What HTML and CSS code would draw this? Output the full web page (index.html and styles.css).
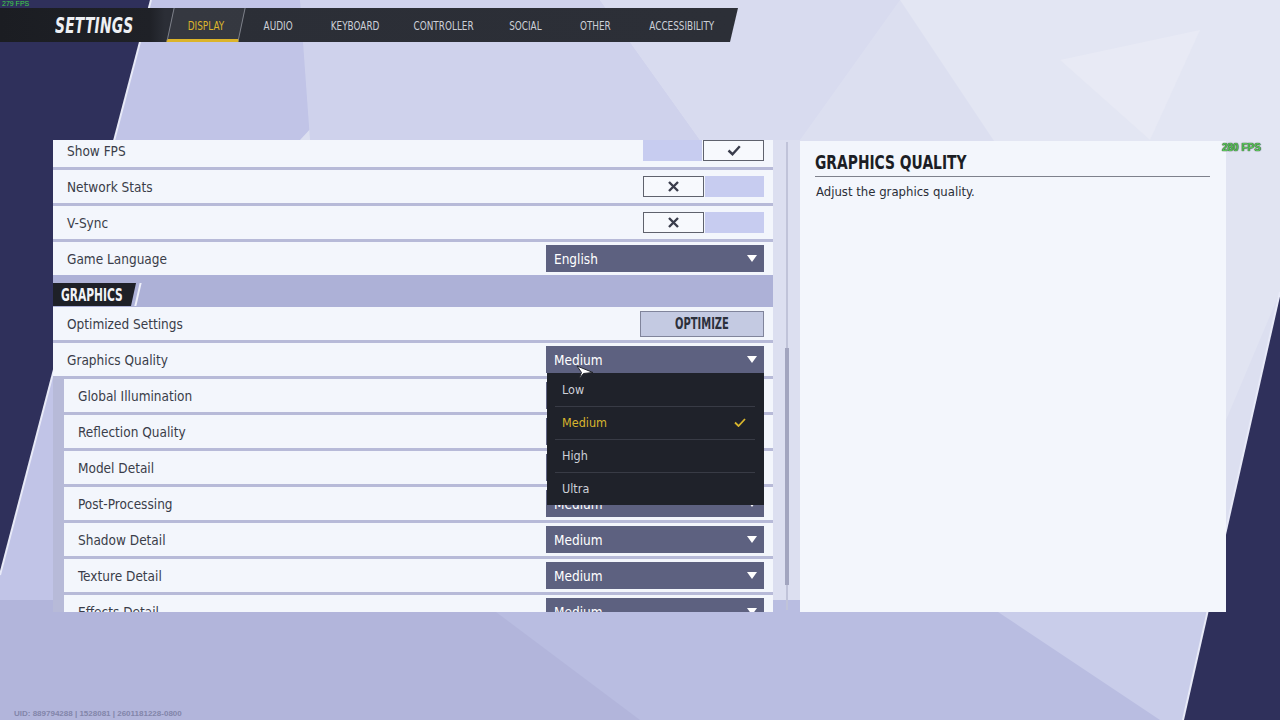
FILE: index.html
```html
<!DOCTYPE html>
<html lang="en">
<head>
    <meta charset="UTF-8">
    <meta name="viewport" content="width=device-width, initial-scale=1.0">
    <title>Settings - Display</title>
    <link rel="stylesheet" href="styles.css">
</head>
<body>

    <svg class="backdrop" viewBox="0 0 1280 720" preserveAspectRatio="none">
        <rect width="1280" height="720" fill="#dcdff0"/>
        <polygon points="150,0 430,0 300,140 0,720 0,575" fill="#c1c4e7"/>
        <polygon points="300,0 600,0 700,140 310,140" fill="#cfd2ec"/>
        <polygon points="600,0 900,0 800,140 700,140" fill="#d8dbef"/>
        <polygon points="900,0 1280,0 1280,160 1000,150" fill="#e3e6f3"/>
        <polygon points="1060,60 1200,30 1150,140" fill="#e8eaf5"/>
        <polygon points="1226,150 1280,150 1280,292 1226,420" fill="#e1e4f2"/>
        <polygon points="0,600 1280,600 1280,720 0,720" fill="#b2b5db"/>
        <polygon points="480,600 980,600 1180,720 640,720" fill="#b9bde1"/>
        <polygon points="980,600 1280,600 1280,720 1160,720" fill="#c9cdea"/>
        <polygon points="0,0 151,0 0,575" fill="#2f305b"/>
        <line x1="151" y1="0" x2="0" y2="575" stroke="#e8eaf8" stroke-width="2"/>
        <polygon points="1280,292 1280,720 1183,720" fill="#2f305b"/>
        <line x1="1280" y1="292" x2="1183" y2="720" stroke="#e8eaf8" stroke-width="2"/>
    </svg>

    <div class="fps-top">279 FPS</div>

    <header class="topbar">
        <div class="brand"><span>SETTINGS</span></div>
        <nav class="tabs">
            <a class="tab active"><span>DISPLAY</span></a>
            <a class="tab"><span>AUDIO</span></a>
            <a class="tab"><span>KEYBOARD</span></a>
            <a class="tab"><span>CONTROLLER</span></a>
            <a class="tab"><span>SOCIAL</span></a>
            <a class="tab"><span>OTHER</span></a>
            <a class="tab"><span>ACCESSIBILITY</span></a>
        </nav>
    </header>

    <main class="content">
        <section class="list-panel">
            <div class="list">
                <div class="row">
                    <span class="label">Show FPS</span>
                    <div class="toggle">
                        <span class="half fill"></span>
                        <span class="half box">
                            <svg width="14" height="11" viewBox="0 0 14 11"><path d="M1.5 5.5 L5.5 9.2 L12.8 1.2" fill="none" stroke="#3a3d4c" stroke-width="2.4"/></svg>
                        </span>
                    </div>
                </div>
                <div class="row">
                    <span class="label">Network Stats</span>
                    <div class="toggle">
                        <span class="half box">
                            <svg width="11" height="11" viewBox="0 0 11 11"><path d="M1 1 L10 10 M10 1 L1 10" stroke="#3a3d4c" stroke-width="2.4"/></svg>
                        </span>
                        <span class="half fill"></span>
                    </div>
                </div>
                <div class="row">
                    <span class="label">V-Sync</span>
                    <div class="toggle">
                        <span class="half box">
                            <svg width="11" height="11" viewBox="0 0 11 11"><path d="M1 1 L10 10 M10 1 L1 10" stroke="#3a3d4c" stroke-width="2.4"/></svg>
                        </span>
                        <span class="half fill"></span>
                    </div>
                </div>
                <div class="row">
                    <span class="label">Game Language</span>
                    <div class="select">English <svg class="caret" width="10" height="7" viewBox="0 0 10 7"><polygon points="0,0 10,0 5,7" fill="#fff"/></svg></div>
                </div>

                <div class="section">
                    <span class="section-tag"><span>GRAPHICS</span></span>
                    <span class="slash"></span>
                </div>

                <div class="row">
                    <span class="label">Optimized Settings</span>
                    <button class="btn"><span>OPTIMIZE</span></button>
                </div>
                <div class="row">
                    <span class="label">Graphics Quality</span>
                    <div class="select open">Medium <svg class="caret" width="10" height="7" viewBox="0 0 10 7"><polygon points="0,0 10,0 5,7" fill="#fff"/></svg>
                        <ul class="menu">
                            <li>Low</li>
                            <li class="picked">Medium
                                <svg width="12" height="9" viewBox="0 0 12 9"><path d="M1 4.5 L4.5 8 L11 1" fill="none" stroke="#d8b52d" stroke-width="1.8"/></svg>
                            </li>
                            <li>High</li>
                            <li>Ultra</li>
                        </ul>
                    </div>
                </div>
                <!-- these three selects sit under the open menu -->
                <div class="row sub">
                    <span class="label">Global Illumination</span>
                    <div class="select"></div>
                </div>
                <div class="row sub">
                    <span class="label">Reflection Quality</span>
                    <div class="select"></div>
                </div>
                <div class="row sub">
                    <span class="label">Model Detail</span>
                    <div class="select"></div>
                </div>
                <div class="row sub">
                    <span class="label">Post-Processing</span>
                    <div class="select">Medium <svg class="caret" width="10" height="7" viewBox="0 0 10 7"><polygon points="0,0 10,0 5,7" fill="#fff"/></svg></div>
                </div>
                <div class="row sub">
                    <span class="label">Shadow Detail</span>
                    <div class="select">Medium <svg class="caret" width="10" height="7" viewBox="0 0 10 7"><polygon points="0,0 10,0 5,7" fill="#fff"/></svg></div>
                </div>
                <div class="row sub">
                    <span class="label">Texture Detail</span>
                    <div class="select">Medium <svg class="caret" width="10" height="7" viewBox="0 0 10 7"><polygon points="0,0 10,0 5,7" fill="#fff"/></svg></div>
                </div>
                <div class="row sub">
                    <span class="label">Effects Detail</span>
                    <div class="select">Medium <svg class="caret" width="10" height="7" viewBox="0 0 10 7"><polygon points="0,0 10,0 5,7" fill="#fff"/></svg></div>
                </div>
            </div>
        </section>

        <div class="scrollbar"><div class="thumb"></div></div>

        <aside class="info-panel">
            <div class="info-head"><h2 class="info-title">GRAPHICS QUALITY</h2></div>
            <p class="info-text">Adjust the graphics quality.</p>
        </aside>
    </main>

    <div class="fps-corner">280 FPS</div>

    <svg class="cursor" width="18" height="15" viewBox="0 0 18 15">
        <polygon points="1,1 17,7.5 7.5,8.5 3,14 5.5,7.5" fill="#fff" stroke="#23252c" stroke-width="1"/>
    </svg>

    <div class="uid">UID: 889794288 | 1528081 | 2601181228-0800</div>

</body>
</html>
```

FILE: styles.css
```css
body {
    margin: 0;
    padding-top: 8px;
    width: 1280px;
    height: 720px;
    box-sizing: border-box;
    overflow: hidden;
    position: relative;
    font-family: "DejaVu Sans Condensed", "DejaVu Sans", sans-serif;
    background: #dcdff0;
    color: #3a3d49;
}

.backdrop {
    position: absolute;
    top: 0;
    left: 0;
    width: 1280px;
    height: 720px;
    z-index: 0;
}

/* top navigation */
.topbar {
    position: relative;
    z-index: 1;
    display: flex;
    width: 738px;
    height: 34px;
    background: linear-gradient(90deg, #1b1d22 0, #1f2127 150px, #2b2e36 165px, #2c2f37 100%);
    clip-path: polygon(0 0, 738px 0, 730px 100%, 0 100%);
}
.brand {
    width: 168px;
    padding-left: 55px;
    box-sizing: border-box;
    display: flex;
    align-items: center;
}
.brand span {
    display: inline-block;
    font-size: 22px;
    font-weight: bold;
    font-style: italic;
    color: #eef0f4;
    transform: scaleX(.7);
    transform-origin: left center;
    letter-spacing: .3px;
}
.tabs {
    display: grid;
    grid-template-columns: 76px 68px 86px 92px 71px 68px 105px;
}
.tab {
    position: relative;
    display: flex;
    align-items: center;
    justify-content: center;
    color: #cdd0d8;
    font-size: 13px;
}
.tab span {
    display: inline-block;
    transform: scaleX(.76);
    white-space: nowrap;
}
.tab.active {
    color: #dcb52c;
}
.tab.active::before {
    content: '';
    position: absolute;
    top: 0;
    bottom: 0;
    left: 2px;
    right: 2px;
    transform: skewX(-12deg);
    border-left: 1px solid #7d8089;
    border-right: 1px solid #7d8089;
    border-bottom: 3px solid #dcb42a;
    background: rgba(255, 255, 255, .05);
}

/* main area */
.content {
    position: relative;
    z-index: 1;
    display: flex;
    margin-top: 98px;
    padding-left: 53px;
}
.list-panel {
    width: 720px;
    height: 472px;
    overflow: hidden;
    background: #b7bad8;
}
.list {
    display: flex;
    flex-direction: column;
    gap: 3px;
    margin-top: -6px;
}
.row {
    height: 33px;
    flex: none;
    display: flex;
    align-items: center;
    justify-content: space-between;
    padding: 0 9px 0 14px;
    background: #f3f6fc;
}
.row.sub {
    margin-left: 11px;
}
.label {
    font-size: 13.5px;
    color: #3a3d49;
}

.toggle {
    display: flex;
    gap: 1px;
    width: 121px;
    height: 21px;
}
.half {
    flex: 1;
    display: flex;
    align-items: center;
    justify-content: center;
}
.half.fill {
    background: #c7ccf0;
}
.half.box {
    background: #f7f9fd;
    border: 1px solid #5f626d;
}

.select {
    position: relative;
    width: 218px;
    height: 27px;
    box-sizing: border-box;
    padding: 0 7px 0 8px;
    display: flex;
    align-items: center;
    justify-content: space-between;
    background: #5d6180;
    color: #fff;
    font-size: 13.5px;
}
.select.open {
    z-index: 5;
}
.menu {
    position: absolute;
    top: 100%;
    left: 1px;
    width: 217px;
    margin: 0;
    padding: 0;
    list-style: none;
    background: #1f222a;
}
.menu li {
    position: relative;
    height: 33px;
    display: flex;
    align-items: center;
    justify-content: space-between;
    padding: 0 18px 0 15px;
    color: #cdd0d8;
    font-size: 12.5px;
}
.menu li + li::before {
    content: '';
    position: absolute;
    top: 0;
    left: 8px;
    right: 9px;
    height: 1px;
    background: #383b45;
}
.menu li.picked {
    color: #d8b52d;
}

.btn {
    width: 124px;
    height: 26px;
    margin: 0;
    padding: 0;
    border: 1px solid #80849b;
    background: #c4cae2;
    color: #2c303c;
    font-family: inherit;
    font-size: 16px;
    font-weight: bold;
}
.btn span {
    display: inline-block;
    transform: scaleX(.69);
}

.section {
    height: 32px;
    flex: none;
    margin: -3px 0;
    display: flex;
    align-items: flex-end;
    padding-bottom: 1px;
    box-sizing: border-box;
    background: #adb1d7;
}
.section-tag {
    width: 83px;
    height: 23px;
    padding-left: 8px;
    box-sizing: border-box;
    display: flex;
    align-items: center;
    background: #1e2027;
    clip-path: polygon(0 0, 100% 0, calc(100% - 5px) 100%, 0 100%);
}
.section-tag span {
    display: inline-block;
    color: #f2f3f7;
    font-size: 18px;
    font-weight: bold;
    transform: scaleX(.66);
    transform-origin: left center;
}
.slash {
    width: 2px;
    height: 23px;
    margin-left: 1px;
    background: #eef0fa;
    transform: skewX(-13deg);
}

.scrollbar {
    width: 4px;
    height: 468px;
    margin: 2px 0 0 12px;
    background: linear-gradient(90deg, transparent 1px, #c0c3d9 1px, #c0c3d9 3px, transparent 3px);
}
.thumb {
    height: 237px;
    margin-top: 206px;
    background: #a2a5bf;
}

.info-panel {
    width: 426px;
    height: 471px;
    margin: 1px 0 0 11px;
    padding: 9px 16px 0 15px;
    box-sizing: border-box;
    background: #f3f6fc;
}
.info-head {
    padding-bottom: 2px;
    border-bottom: 1px solid #7e818c;
}
.info-title {
    display: inline-block;
    margin: 0;
    font-size: 19px;
    line-height: 24px;
    font-weight: bold;
    color: #1c1e25;
    transform: scaleX(.81);
    transform-origin: left center;
    white-space: nowrap;
}
.info-text {
    margin: 5px 0 0 1px;
    font-size: 13px;
    line-height: 20px;
    color: #2b2e37;
}

/* overlays */
.fps-top {
    position: absolute;
    top: 0;
    left: 2px;
    z-index: 2;
    font-family: "Liberation Sans", sans-serif;
    font-size: 7px;
    color: #3fd34a;
}
.fps-corner {
    position: absolute;
    top: 142px;
    left: 1222px;
    z-index: 2;
    font-family: "Liberation Sans", sans-serif;
    font-size: 10px;
    font-weight: bold;
    color: #5cc45c;
    text-shadow: 0 0 1px #1b3a1b, 0 0 1px #1b3a1b;
}
.cursor {
    position: absolute;
    left: 576px;
    top: 365px;
    z-index: 6;
}
.uid {
    position: absolute;
    left: 14px;
    top: 709px;
    z-index: 2;
    font-family: "Liberation Sans", sans-serif;
    font-size: 8px;
    font-weight: bold;
    color: #8285aa;
}
```
